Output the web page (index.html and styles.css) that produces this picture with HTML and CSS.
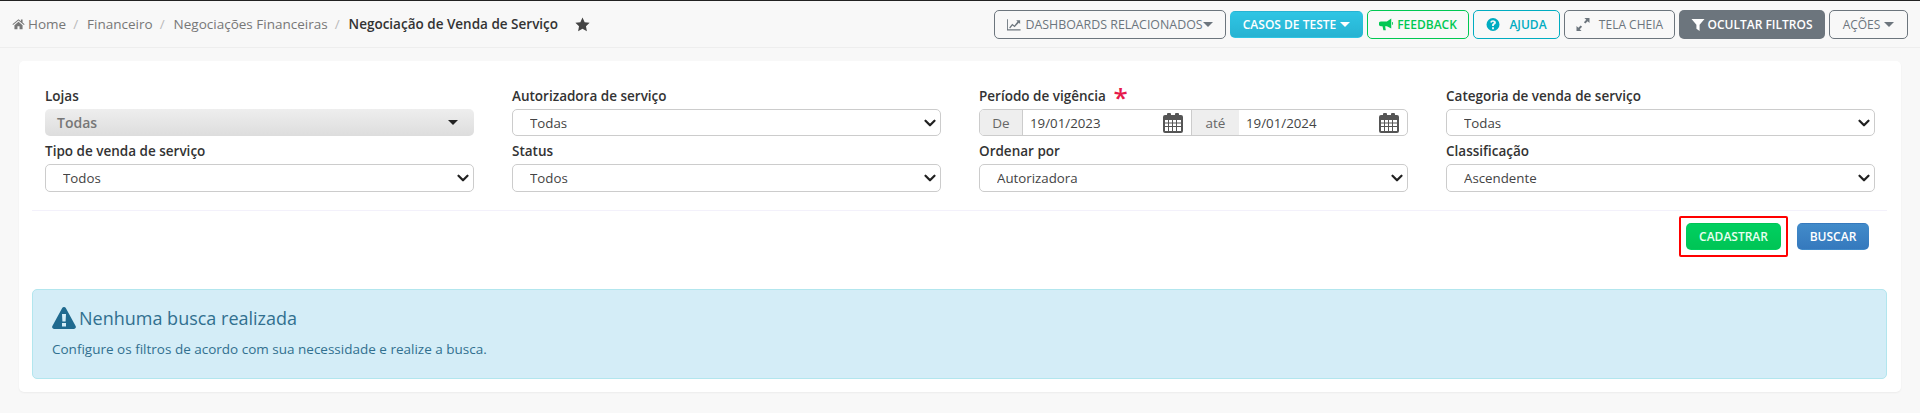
FILE: index.html
```html
<!DOCTYPE html>
<html lang="pt-BR">
<head>
    <meta charset="UTF-8">
    <meta name="viewport" content="width=device-width, initial-scale=1.0">
    <title>Negociação de Venda de Serviço</title>
    <link rel="stylesheet" href="styles.css">
</head>
<body>
    <!-- Barra superior -->
    <header class="topBar">
        <nav class="breadcrumb">
            <svg class="homeIcon" viewBox="0 0 16 14"><path d="M8 1 0.5 7.4l.8.9L8 2.7l6.7 5.6.8-.9L13 5.300V1.500h-2v2.100zM3 8.500V13.500h3.700V9.800h2.600v3.700H13V8.500L8 4.300z"/></svg>
            <a>Home</a><span class="sep">/</span>
            <a>Financeiro</a><span class="sep">/</span>
            <a>Negociações Financeiras</a><span class="sep">/</span>
            <strong>Negociação de Venda de Serviço</strong>
            <svg class="starIcon" viewBox="0 0 16 16"><path d="M8 .6l2.300 4.900 5.300.7-3.900 3.700 1 5.300L8 12.600l-4.700 2.600 1-5.300L.4 6.200l5.300-.7z"/></svg>
        </nav>
        <div class="actions">
            <button class="btn btnOutline btnDash">
                <svg class="icon" viewBox="0 0 16 14"><path d="M1 1v11.500h14.500v1.300H0V1zM2.500 10.500l3.500-4.500 2.500 2L12 3.500l-1.500-1.500H15v4.500L13.500 5 8.700 10 6.300 8l-2.800 3.500z"/></svg>
                <span>DASHBOARDS RELACIONADOS</span><i class="caret caretTight"></i>
            </button>
            <button class="btn btnInfo"><span>CASOS DE TESTE</span><i class="caret"></i></button>
            <button class="btn btnGreen">
                <svg class="icon" viewBox="0 0 16 14"><path d="M14 0v11.500L9 9H7l.8 4.500H5L4 9H2.500A2.500 2.500 0 0 1 2.500 3.500H9zM15 4.200a1.500 1.500 0 0 1 0 3z"/></svg>
                <span>FEEDBACK</span>
            </button>
            <button class="btn btnTeal">
                <svg class="icon iconWide" viewBox="0 0 14 14"><path fill-rule="evenodd" d="M7 0a7 7 0 1 1 0 14A7 7 0 0 1 7 0zM6 10v2h2v-2zM7 2.300c-1.600 0-2.700.9-3 2.200l1.700.6c.2-.7.600-1 1.200-1 .6 0 1 .3 1 .8 0 .4-.3.7-.9 1.100-.8.5-1 1.100-1 2.200v.3h2c0-.8.1-1 .7-1.400 1-.7 1.400-1.300 1.400-2.300 0-1.500-1.300-2.500-3.100-2.500z"/></svg>
                <span>AJUDA</span>
            </button>
            <button class="btn btnOutline btnFull">
                <svg class="icon iconWide" viewBox="0 0 14 14"><path d="M8.500 0H14v5.500L12 3.500 9.500 6 8 4.500 10.500 2zM5.500 14H0V8.500L2 10.500 4.500 8 6 9.500 3.500 12z"/></svg>
                <span>TELA CHEIA</span>
            </button>
            <button class="btn btnDark">
                <svg class="icon iconTight" viewBox="0 0 14 14"><path d="M0 1h14L8.700 7.300V14L5.300 11.500V7.300z"/></svg>
                <span>OCULTAR FILTROS</span>
            </button>
            <button class="btn btnOutline btnMore"><span>AÇÕES</span><i class="caret"></i></button>
        </div>
    </header>

    <main class="card">
        <!-- Filtros -->
        <div class="filters">
            <div class="field">
                <label>Lojas</label>
                <div class="fakeSelect"><span>Todas</span><i class="caret caretDark"></i></div>
            </div>
            <div class="field">
                <label>Autorizadora de serviço</label>
                <select><option>Todas</option></select>
            </div>
            <div class="field">
                <label>Período de vigência <span class="required">*</span></label>
                <div class="dateGroup">
                    <span class="addon addonFirst">De</span>
                    <div class="dateBox">
                        <input type="text" value="19/01/2023">
                        <svg class="calIcon" viewBox="0 0 20 20"><path fill-rule="evenodd" d="M5 0h2a1 1 0 0 1 1 1v1h4V1a1 1 0 0 1 1-1h2a1 1 0 0 1 1 1v1h2a2 2 0 0 1 2 2v14a2 2 0 0 1-2 2H2a2 2 0 0 1-2-2V4a2 2 0 0 1 2-2h2V1a1 1 0 0 1 1-1zM2 7v2.500h3V7zm4 0v2.500h3V7zm4 0v2.500h3V7zm4 0v2.500h4V7zM2 10.500V13h3v-2.500zm4 0V13h3v-2.500zm4 0V13h3v-2.500zm4 0V13h4v-2.500zM2 14v4h3v-4zm4 0v4h3v-4zm4 0v4h3v-4zm4 0v4h4v-4z"/></svg>
                    </div>
                    <span class="addon addonMiddle">até</span>
                    <div class="dateBox">
                        <input type="text" value="19/01/2024">
                        <svg class="calIcon" viewBox="0 0 20 20"><path fill-rule="evenodd" d="M5 0h2a1 1 0 0 1 1 1v1h4V1a1 1 0 0 1 1-1h2a1 1 0 0 1 1 1v1h2a2 2 0 0 1 2 2v14a2 2 0 0 1-2 2H2a2 2 0 0 1-2-2V4a2 2 0 0 1 2-2h2V1a1 1 0 0 1 1-1zM2 7v2.500h3V7zm4 0v2.500h3V7zm4 0v2.500h3V7zm4 0v2.500h4V7zM2 10.500V13h3v-2.500zm4 0V13h3v-2.500zm4 0V13h3v-2.500zm4 0V13h4v-2.500zM2 14v4h3v-4zm4 0v4h3v-4zm4 0v4h3v-4zm4 0v4h4v-4z"/></svg>
                    </div>
                </div>
            </div>
            <div class="field">
                <label>Categoria de venda de serviço</label>
                <select><option>Todas</option></select>
            </div>
            <div class="field">
                <label>Tipo de venda de serviço</label>
                <select class="tall"><option>Todos</option></select>
            </div>
            <div class="field">
                <label>Status</label>
                <select class="tall"><option>Todos</option></select>
            </div>
            <div class="field">
                <label>Ordenar por</label>
                <select class="tall"><option>Autorizadora</option></select>
            </div>
            <div class="field">
                <label>Classificação</label>
                <select class="tall"><option>Ascendente</option></select>
            </div>
        </div>

        <div class="formButtons">
            <div class="redBox"><button class="btn btnSuccess">CADASTRAR</button></div>
            <button class="btn btnPrimary">BUSCAR</button>
        </div>

        <!-- Aviso -->
        <div class="notice">
            <h4>
                <svg class="warnIcon" viewBox="0 0 24 22"><path fill-rule="evenodd" d="M12 0c.8 0 1.400.4 1.800 1.100l9.800 18c.8 1.400-.2 2.900-1.800 2.900H2.200C.6 22-.4 20.500.4 19.100l9.800-18C10.600.4 11.200 0 12 0zM10 7l.4 7.500h3.200L14 7zm0 9v3.500h4V16z"/></svg>
                Nenhuma busca realizada
            </h4>
            <p>Configure os filtros de acordo com sua necessidade e realize a busca.</p>
        </div>
    </main>
</body>
</html>
```

FILE: styles.css
```css
* {
    box-sizing: border-box;
}
body {
    margin: 0;
    height: 413px;
    overflow: hidden;
    background-color: #f8f8f8;
    border-top: 1px solid #222;
    font-family: "Open Sans", sans-serif;
    font-size: 13.5px;
    color: #333;
}
.topBar {
    display: flex;
    justify-content: space-between;
    align-items: center;
    height: 47px;
    padding: 0 12px;
    border-bottom: 1px solid #eee;
}
.breadcrumb {
    display: flex;
    align-items: center;
    color: #777;
    font-size: 13.5px;
}
.breadcrumb strong {
    color: #333;
    font-weight: 600;
}
.homeIcon {
    width: 13px;
    height: 12px;
    margin-right: 3px;
    fill: #777;
}
.sep {
    margin: 0 9px 0 7px;
    color: #bbb;
}
.starIcon {
    width: 15px;
    height: 15px;
    margin-left: 17px;
    fill: #444;
}
.actions {
    display: flex;
    align-items: center;
    gap: 4px;
}
.btn {
    display: inline-flex;
    align-items: center;
    justify-content: center;
    height: 29px;
    padding: 0;
    border: 1px solid transparent;
    border-radius: 5px;
    background: none;
    font-family: inherit;
    font-size: 12px;
    font-weight: 400;
    white-space: nowrap;
}
.icon {
    width: 14px;
    height: 13px;
    margin-right: 4px;
    fill: currentColor;
}
.iconWide {
    margin-right: 9px;
}
.iconTight {
    margin-right: 2px;
}
.caret {
    display: inline-block;
    width: 0;
    height: 0;
    margin-left: 4px;
    border-top: 5px solid currentColor;
    border-left: 5px solid transparent;
    border-right: 5px solid transparent;
}
.caretTight {
    margin-left: 0;
}
.caretDark {
    margin-left: 0;
    border-top-color: #222;
}
.btnOutline {
    border-color: #6c757d;
    color: #6c757d;
}
.btnDash {
    width: 232px;
    font-size: 12.4px;
}
.btnFull {
    width: 111px;
}
.btnMore {
    width: 79px;
}
.btnInfo {
    width: 133px;
    height: 27px;
    background: linear-gradient(#2fc5e4, #27b3d2);
    color: #fff;
    font-weight: 600;
}
.btnGreen {
    width: 102px;
    border-color: #00c853;
    color: #00c853;
    font-weight: 600;
}
.btnTeal {
    width: 87px;
    border-color: #00acc1;
    color: #00acc1;
    font-weight: 600;
}
.btnDark {
    width: 146px;
    background-color: #6c757d;
    color: #fff;
    font-weight: 600;
}
.card {
    margin: 13px 19px 0;
    height: 331px;
    padding: 25px 14px 0 13px;
    background-color: #fff;
    border-radius: 5px;
    box-shadow: 0 1px 2px rgba(0, 0, 0, 0.05);
}
.filters {
    display: grid;
    grid-template-columns: repeat(4, 429px);
    column-gap: 38px;
    row-gap: 5px;
    padding: 0 12px 18px 13px;
    border-bottom: 1px solid #f3f1fb;
}
.field label {
    display: block;
    height: 20px;
    margin-bottom: 3px;
    font-size: 13.5px;
    font-weight: 600;
    line-height: 20px;
}
.required {
    margin-left: 4px;
    color: #e6194b;
    font-size: 26px;
    line-height: 20px;
    vertical-align: -6px;
}
select {
    display: block;
    width: 100%;
    height: 27px;
    padding: 0 28px 0 17px;
    border: 1px solid #ccc;
    border-radius: 5px;
    appearance: none;
    background: #fff url("data:image/svg+xml,%3Csvg xmlns='http://www.w3.org/2000/svg' viewBox='0 0 16 16'%3E%3Cpath fill='none' stroke='%23222' stroke-linecap='round' stroke-linejoin='round' stroke-width='3' d='M2 5l6 6 6-6'/%3E%3C/svg%3E") no-repeat right 2px center / 16px 12px;
    font-family: inherit;
    font-size: 13.3px;
    color: #444;
}
select.tall {
    height: 28px;
}
.fakeSelect {
    display: flex;
    justify-content: space-between;
    align-items: center;
    height: 27px;
    padding: 0 16px 0 12px;
    border-radius: 5px;
    background: linear-gradient(#eee, #ddd);
    font-size: 14px;
    font-weight: 600;
    color: #777;
}
.dateGroup {
    display: flex;
    height: 27px;
    border: 1px solid #ccc;
    border-radius: 5px;
    overflow: hidden;
}
.addon {
    display: flex;
    align-items: center;
    justify-content: center;
    background-color: #eee;
    color: #666;
}
.addonFirst {
    width: 43px;
    border-right: 1px solid #ccc;
}
.addonMiddle {
    width: 48px;
    border-left: 1px solid #ccc;
}
.dateBox {
    display: flex;
    flex: 1;
    align-items: center;
    padding-right: 8px;
}
.dateBox input {
    flex: 1;
    width: 100%;
    padding: 0 7px;
    border: 0;
    outline: 0;
    font-family: inherit;
    font-size: 13.3px;
    color: #444;
}
.calIcon {
    flex: none;
    width: 20px;
    height: 20px;
    fill: #555;
}
.formButtons {
    display: flex;
    justify-content: flex-end;
    align-items: center;
    gap: 9px;
    padding: 5px 18px 0 0;
}
.redBox {
    padding: 5px;
    border: 2px solid #f00;
    border-radius: 2px;
}
.redBox .btn {
    display: flex;
}
.btnSuccess {
    width: 95px;
    height: 27px;
    background: linear-gradient(#00d060, #00c455);
    color: #e8fff0;
    font-weight: 600;
}
.btnPrimary {
    width: 72px;
    height: 27px;
    background: linear-gradient(#428bca, #3579bd);
    color: #fff;
    font-weight: 600;
}
.notice {
    height: 90px;
    margin-top: 32px;
    padding: 16px 19px;
    background-color: #d4edf7;
    border: 1px solid #b2e6ee;
    border-radius: 5px;
    color: #31708f;
}
.notice h4 {
    display: flex;
    align-items: center;
    gap: 3px;
    margin: 0 0 10px;
    font-size: 18px;
    font-weight: 400;
    line-height: 24px;
}
.warnIcon {
    width: 24px;
    height: 22px;
    fill: #1f6a8f;
}
.notice p {
    margin: 0;
    font-size: 13.5px;
}
```
